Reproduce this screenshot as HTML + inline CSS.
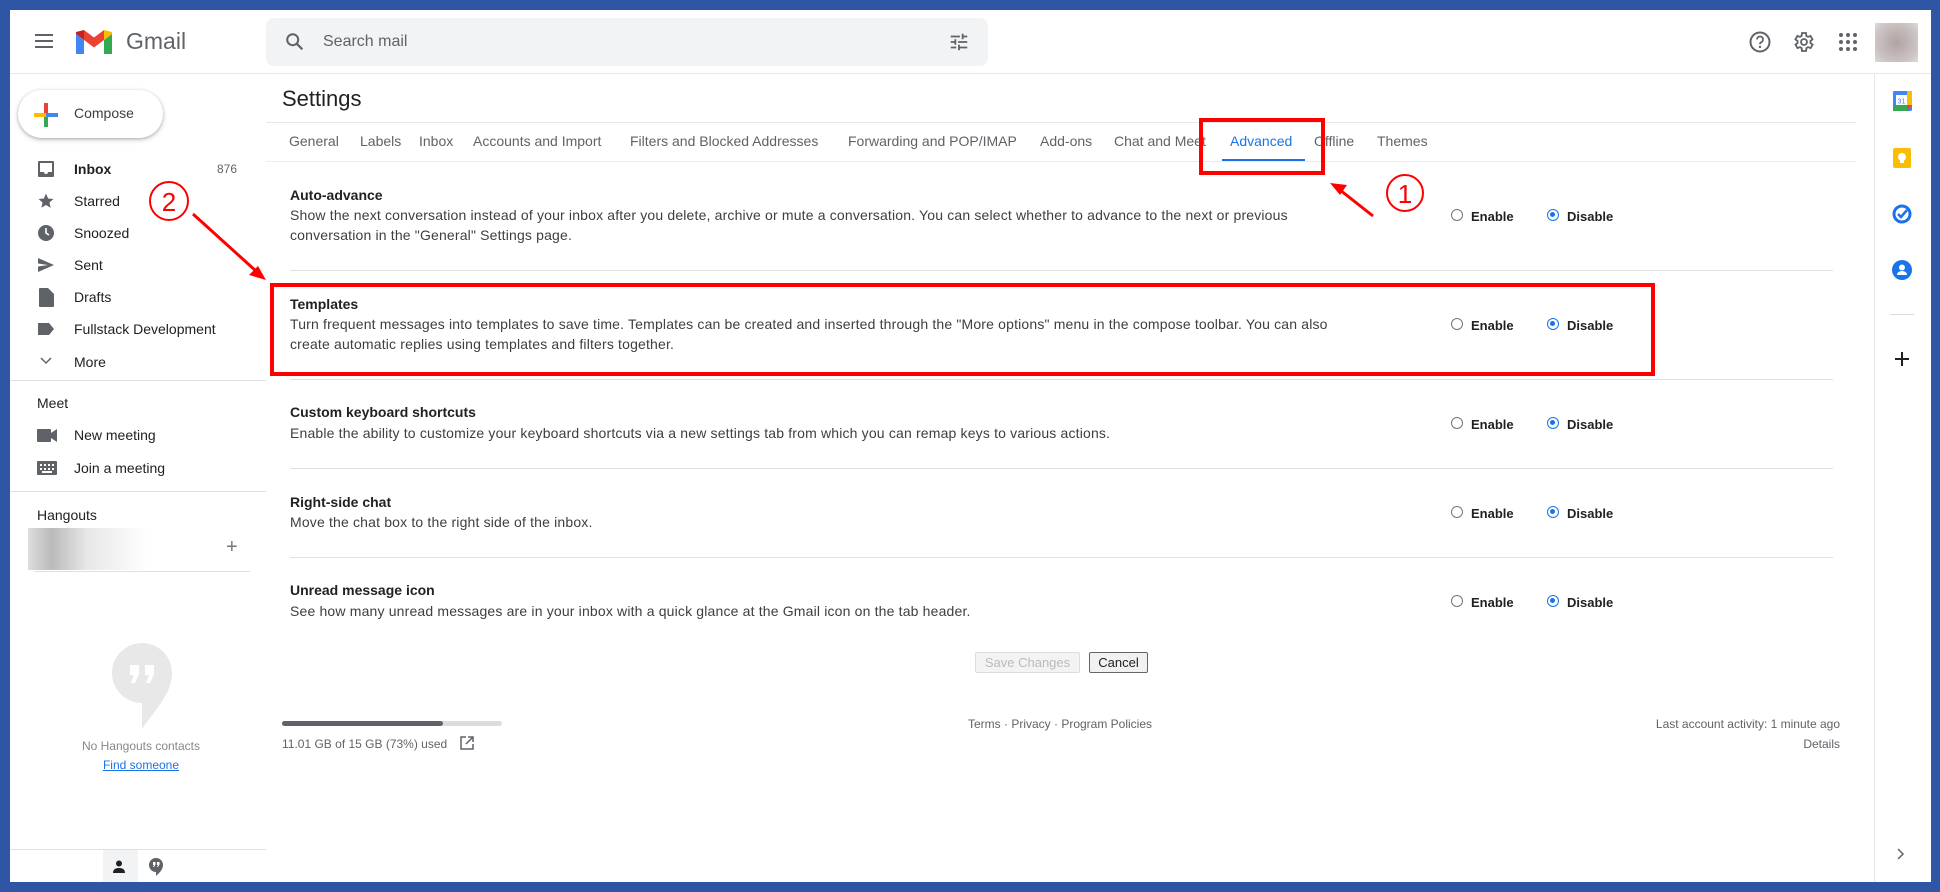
<!DOCTYPE html>
<html><head><meta charset="utf-8"><style>
*{margin:0;padding:0;box-sizing:border-box}
body{width:1940px;height:892px;background:#2f56a5;font-family:"Liberation Sans",Arial,sans-serif;color:#202124;position:relative;overflow:hidden}
#app{position:absolute;left:10px;top:10px;width:1921px;height:872px;background:#fff}
.a{position:absolute;white-space:nowrap}
.hl{position:absolute;height:1px;background:#e0e0e0}
.nav{font-size:14px;color:#202124}
.ico{position:absolute}
.tab{position:absolute;top:133px;font-size:14px;color:#5f6368}
.t{position:absolute;left:290px;font-size:14px;font-weight:bold;color:#202124}
.d{position:absolute;left:290px;font-size:14px;color:#3c4043;line-height:20px;letter-spacing:0.17px}
.r{position:absolute;width:12px;height:12px;border:1px solid #757575;border-radius:50%;background:#fff}
.r.on{border:1.5px solid #1a73e8}
.r.on:after{content:"";position:absolute;left:2px;top:2px;width:5px;height:5px;border-radius:50%;background:#1a73e8}
.rl{position:absolute;font-size:13px;font-weight:bold;color:#202124}
</style></head><body>
<div id="app"></div>
<!-- header -->
<svg class="ico" style="left:35px;top:33px" width="20" height="16"><rect y="1" width="18" height="2" fill="#5f6368"/><rect y="7" width="18" height="2" fill="#5f6368"/><rect y="13" width="18" height="2" fill="#5f6368"/></svg>
<svg class="ico" style="left:76px;top:29px" width="36" height="27" viewBox="0 0 36 27"><path d="M0 5v20h8V11z" fill="#4285f4"/><path d="M28 11v14h8V5z" fill="#34a853"/><path d="M28 1v10l8-6V3z" fill="#fbbc04"/><path d="M8 11V1l10 7.5L28 1v10l-10 7.5z" fill="#ea4335"/><path d="M0 3v2l8 6V1z" fill="#c5221f"/></svg>
<div class="a" style="left:126px;top:28px;font-size:23px;color:#5f6368">Gmail</div>
<div class="a" style="left:266px;top:18px;width:722px;height:48px;background:#f1f3f4;border-radius:8px"></div>
<svg class="ico" style="left:284px;top:31px" width="22" height="22" viewBox="0 0 24 24"><circle cx="9.5" cy="9.5" r="6" stroke="#5f6368" stroke-width="2.2" fill="none"/><path d="M14 14l6 6" stroke="#5f6368" stroke-width="2.4"/></svg>
<div class="a" style="left:323px;top:33px;font-size:16px;color:#5f6368">Search mail</div>
<svg class="ico" style="left:948px;top:31px" width="22" height="22" viewBox="0 0 24 24"><path d="M3 17v2h6v-2zM3 5v2h10V5zm10 16v-2h8v-2h-8v-2h-2v6zM7 9v2H3v2h4v2h2V9zm14 4v-2H11v2zm-6-4h2V7h4V5h-4V3h-2z" fill="#5f6368"/></svg>
<svg class="ico" style="left:1748px;top:30px" width="24" height="24" viewBox="0 0 24 24"><circle cx="12" cy="12" r="9.5" stroke="#5f6368" stroke-width="2" fill="none"/><path d="M9 9.5a3 3 0 1 1 4 2.8c-.8.4-1 1-1 2" stroke="#5f6368" stroke-width="1.8" fill="none"/><circle cx="12" cy="17" r="1.2" fill="#5f6368"/></svg>
<svg class="ico" style="left:1791px;top:30px" width="24" height="24" viewBox="0 0 24 24"><path d="M19.4 13a7.5 7.5 0 0 0 0-2l2.1-1.6-2-3.5-2.5 1a7 7 0 0 0-1.7-1L15 3h-4l-.4 2.9a7 7 0 0 0-1.7 1l-2.5-1-2 3.5L6.6 11a7.5 7.5 0 0 0 0 2l-2.1 1.6 2 3.5 2.5-1a7 7 0 0 0 1.7 1L11 21h4l.4-2.9a7 7 0 0 0 1.7-1l2.5 1 2-3.5z" stroke="#5f6368" stroke-width="1.8" fill="none"/><circle cx="13" cy="12" r="3" stroke="#5f6368" stroke-width="1.8" fill="none"/></svg>
<svg class="ico" style="left:1838px;top:32px" width="20" height="20" viewBox="0 0 20 20" fill="#5f6368"><circle cx="3" cy="3" r="2"/><circle cx="10" cy="3" r="2"/><circle cx="17" cy="3" r="2"/><circle cx="3" cy="10" r="2"/><circle cx="10" cy="10" r="2"/><circle cx="17" cy="10" r="2"/><circle cx="3" cy="17" r="2"/><circle cx="10" cy="17" r="2"/><circle cx="17" cy="17" r="2"/></svg>
<div class="a" style="left:1875px;top:23px;width:43px;height:39px;background:radial-gradient(circle at 50% 50%,#b0a3a3,#ccc3c3 70%,#e0dada)"></div>
<div class="hl" style="left:10px;top:73px;width:1921px;background:#e8e8e8"></div>
<!-- sidebar -->
<div class="a" style="left:18px;top:90px;width:145px;height:48px;border-radius:24px;background:#fff;box-shadow:0 1px 3px rgba(60,64,67,.35),0 2px 6px rgba(60,64,67,.15)"></div>
<svg class="ico" style="left:33px;top:102px" width="26" height="26" viewBox="0 0 26 26"><rect x="11" y="1" width="4" height="12" fill="#ea4335"/><rect x="11" y="13" width="4" height="12" fill="#34a853"/><rect x="1" y="11" width="12" height="4" fill="#fbbc04"/><rect x="13" y="11" width="12" height="4" fill="#4285f4"/></svg>
<div class="a" style="left:74px;top:105px;font-size:14px;color:#3c4043">Compose</div>
<svg class="ico" style="left:37px;top:160px" width="18" height="18" viewBox="0 0 18 18"><path d="M2 1h14a1 1 0 0 1 1 1v14a1 1 0 0 1-1 1H2a1 1 0 0 1-1-1V2a1 1 0 0 1 1-1zm1 2v9h4a2 2 0 0 0 4 0h4V3z" fill="#5f6368"/></svg>
<div class="a nav" style="left:74px;top:161px;font-weight:bold">Inbox</div>
<div class="a" style="left:217px;top:162px;font-size:12px;color:#5f6368">876</div>
<svg class="ico" style="left:37px;top:192px" width="18" height="18" viewBox="0 0 24 24"><path d="M12 17.3l6.2 3.7-1.6-7 5.4-4.7-7.2-.6L12 2 9.2 8.7 2 9.3l5.4 4.7-1.6 7z" fill="#5f6368"/></svg>
<div class="a nav" style="left:74px;top:193px">Starred</div>
<svg class="ico" style="left:37px;top:224px" width="18" height="18" viewBox="0 0 18 18"><circle cx="9" cy="9" r="8" fill="#5f6368"/><path d="M9 4v5l3 2" stroke="#fff" stroke-width="1.6" fill="none"/></svg>
<div class="a nav" style="left:74px;top:225px">Snoozed</div>
<svg class="ico" style="left:37px;top:256px" width="18" height="18" viewBox="0 0 18 18"><path d="M1 2l16 7-16 7v-5.5l10-1.5-10-1.5z" fill="#5f6368"/></svg>
<div class="a nav" style="left:74px;top:257px">Sent</div>
<svg class="ico" style="left:38px;top:288px" width="16" height="19" viewBox="0 0 16 19"><path d="M2 0h8l6 6v12a1 1 0 0 1-1 1H2a1 1 0 0 1-1-1V1a1 1 0 0 1 1-1z" fill="#5f6368"/></svg>
<div class="a nav" style="left:74px;top:289px">Drafts</div>
<svg class="ico" style="left:37px;top:322px" width="18" height="14" viewBox="0 0 18 14"><path d="M1 1h11l5 6-5 6H1z" fill="#5f6368"/></svg>
<div class="a nav" style="left:74px;top:321px">Fullstack Development</div>
<svg class="ico" style="left:40px;top:357px" width="12" height="8"><path d="M1 1l5 5 5-5" stroke="#5f6368" stroke-width="1.5" fill="none"/></svg>
<div class="a nav" style="left:74px;top:354px">More</div>
<div class="hl" style="left:10px;top:380px;width:256px"></div>
<div class="a nav" style="left:37px;top:395px;font-size:14px">Meet</div>
<svg class="ico" style="left:37px;top:429px" width="20" height="13" viewBox="0 0 20 13"><rect x="0" y="0" width="14" height="13" rx="1" fill="#5f6368"/><path d="M14 4l6-4v13l-6-4z" fill="#5f6368"/></svg>
<div class="a nav" style="left:74px;top:427px">New meeting</div>
<svg class="ico" style="left:37px;top:461px" width="20" height="14" viewBox="0 0 20 14"><rect width="20" height="14" rx="1" fill="#5f6368"/><g fill="#fff"><rect x="3" y="3" width="2" height="2"/><rect x="7" y="3" width="2" height="2"/><rect x="11" y="3" width="2" height="2"/><rect x="15" y="3" width="2" height="2"/><rect x="3" y="7" width="2" height="2"/><rect x="7" y="7" width="2" height="2"/><rect x="11" y="7" width="2" height="2"/><rect x="15" y="7" width="2" height="2"/><rect x="5" y="10" width="10" height="2"/></g></svg>
<div class="a nav" style="left:74px;top:460px">Join a meeting</div>
<div class="hl" style="left:10px;top:491px;width:256px"></div>
<div class="a nav" style="left:37px;top:507px">Hangouts</div>
<div class="a" style="left:28px;top:528px;width:120px;height:42px;background:linear-gradient(90deg,#ddd,#bbb 20%,#e8e8e8 50%,#fff)"></div>
<div class="a" style="left:226px;top:536px;font-size:20px;color:#777">+</div>
<div class="hl" style="left:34px;top:571px;width:216px"></div>
<svg class="ico" style="left:111px;top:643px" width="62" height="86" viewBox="0 0 62 86"><path d="M31 0a30 30 0 0 1 30 30c0 20-16 36-30 56V60A30 30 0 0 1 31 0z" fill="#e8e8e8"/><path d="M19 22h9v9l-4 9h-4l3-8h-4zM34 22h9v9l-4 9h-4l3-8h-4z" fill="#fff"/></svg>
<div class="a" style="left:0;width:282px;text-align:center;top:739px;font-size:12px;color:#888">No Hangouts contacts</div>
<div class="a" style="left:0;width:282px;text-align:center;top:758px;font-size:12px;color:#1a73e8;text-decoration:underline">Find someone</div>
<div class="hl" style="left:10px;top:849px;width:256px"></div>
<div class="a" style="left:103px;top:850px;width:35px;height:32px;background:#f1f3f4"></div>
<svg class="ico" style="left:113px;top:860px" width="12" height="13"><circle cx="6" cy="3.5" r="3" fill="#202124"/><path d="M0 13c0-4 3-5 6-5s6 1 6 5z" fill="#202124"/></svg>
<svg class="ico" style="left:149px;top:858px" width="14" height="18"><path d="M7 0a7 7 0 0 1 7 7c0 5-4 8-7 11v-4A7 7 0 0 1 7 0z" fill="#5f6368"/><path d="M4 4h2.5v2.5L5 9H4l1-2H4zM8 4h2.5v2.5L9 9H8l1-2H8z" fill="#fff"/></svg>
<!-- settings -->
<div class="a" style="left:282px;top:86px;font-size:22px;color:#202124">Settings</div>
<div class="hl" style="left:266px;top:122px;width:1590px;background:#e8e8e8"></div>
<div class="tab" style="left:289px">General</div>
<div class="tab" style="left:360px">Labels</div>
<div class="tab" style="left:419px">Inbox</div>
<div class="tab" style="left:473px">Accounts and Import</div>
<div class="tab" style="left:630px">Filters and Blocked Addresses</div>
<div class="tab" style="left:848px">Forwarding and POP/IMAP</div>
<div class="tab" style="left:1040px">Add-ons</div>
<div class="tab" style="left:1114px">Chat and Meet</div>
<div class="tab" style="left:1230px;color:#1a73e8">Advanced</div>
<div class="tab" style="left:1314px">Offline</div>
<div class="tab" style="left:1377px">Themes</div>
<div class="a" style="left:1222px;top:159px;width:83px;height:3px;background:#1a73e8"></div>
<div class="hl" style="left:266px;top:161px;width:1590px;background:#ececec"></div>

<div class="t" style="top:187px">Auto-advance</div>
<div class="d" style="top:205px">Show the next conversation instead of your inbox after you delete, archive or mute a conversation. You can select whether to advance to the next or previous<br>conversation in the "General" Settings page.</div>
<div class="hl" style="left:290px;top:270px;width:1543px"></div>
<div class="t" style="top:296px">Templates</div>
<div class="d" style="top:314px">Turn frequent messages into templates to save time. Templates can be created and inserted through the "More options" menu in the compose toolbar. You can also<br>create automatic replies using templates and filters together.</div>
<div class="hl" style="left:290px;top:379px;width:1543px"></div>
<div class="t" style="top:404px">Custom keyboard shortcuts</div>
<div class="d" style="top:423px">Enable the ability to customize your keyboard shortcuts via a new settings tab from which you can remap keys to various actions.</div>
<div class="hl" style="left:290px;top:468px;width:1543px"></div>
<div class="t" style="top:494px">Right-side chat</div>
<div class="d" style="top:512px">Move the chat box to the right side of the inbox.</div>
<div class="hl" style="left:290px;top:557px;width:1543px"></div>
<div class="t" style="top:582px">Unread message icon</div>
<div class="d" style="top:601px">See how many unread messages are in your inbox with a quick glance at the Gmail icon on the tab header.</div>

<!-- radios -->
<div class="r" style="left:1451px;top:209px"></div><div class="rl" style="left:1471px;top:209px">Enable</div><div class="r on" style="left:1547px;top:209px"></div><div class="rl" style="left:1567px;top:209px">Disable</div>
<div class="r" style="left:1451px;top:318px"></div><div class="rl" style="left:1471px;top:318px">Enable</div><div class="r on" style="left:1547px;top:318px"></div><div class="rl" style="left:1567px;top:318px">Disable</div>
<div class="r" style="left:1451px;top:417px"></div><div class="rl" style="left:1471px;top:417px">Enable</div><div class="r on" style="left:1547px;top:417px"></div><div class="rl" style="left:1567px;top:417px">Disable</div>
<div class="r" style="left:1451px;top:506px"></div><div class="rl" style="left:1471px;top:506px">Enable</div><div class="r on" style="left:1547px;top:506px"></div><div class="rl" style="left:1567px;top:506px">Disable</div>
<div class="r" style="left:1451px;top:595px"></div><div class="rl" style="left:1471px;top:595px">Enable</div><div class="r on" style="left:1547px;top:595px"></div><div class="rl" style="left:1567px;top:595px">Disable</div>

<div class="a" style="left:975px;top:652px;width:105px;height:21px;border:1px solid #ddd;background:#f3f3f3;font-size:13px;color:#bbb;text-align:center;line-height:19px;border-radius:2px">Save Changes</div>
<div class="a" style="left:1089px;top:652px;width:59px;height:21px;border:1px solid #666;background:#f1f1f1;font-size:13px;color:#202124;text-align:center;line-height:19px;border-radius:2px">Cancel</div>

<div class="a" style="left:282px;top:721px;width:220px;height:5px;background:#dadce0;border-radius:3px"></div>
<div class="a" style="left:282px;top:721px;width:161px;height:5px;background:#5f6368;border-radius:3px"></div>
<div class="a" style="left:282px;top:737px;font-size:12px;color:#5f6368">11.01 GB of 15 GB (73%) used</div>
<svg class="ico" style="left:460px;top:736px" width="14" height="14" viewBox="0 0 14 14"><path d="M6 1H1v12h12V8M8 1h5v5M13 1L6 8" stroke="#5f6368" stroke-width="1.5" fill="none"/></svg>
<div class="a" style="left:960px;width:200px;text-align:center;top:717px;font-size:12px;color:#5f6368">Terms · Privacy · Program Policies</div>
<div class="a" style="right:100px;top:717px;font-size:12px;color:#5f6368">Last account activity: 1 minute ago</div>
<div class="a" style="right:100px;top:737px;font-size:12px;color:#5f6368">Details</div>

<!-- right panel -->
<div class="a" style="left:1874px;top:74px;width:1px;height:808px;background:#e8e8e8"></div>
<svg class="ico" style="left:1893px;top:91px" width="19" height="20" viewBox="0 0 19 20"><rect x="0" y="0" width="19" height="20" rx="1.5" fill="#4285f4"/><rect x="0" y="14" width="14" height="6" fill="#34a853"/><rect x="14" y="0" width="5" height="14" fill="#fbbc04"/><path d="M14 14h5l-5 6z" fill="#ea4335"/><rect x="3" y="4" width="11" height="10" fill="#fff"/><text x="8.5" y="12.5" font-size="7" fill="#4285f4" text-anchor="middle" font-family="Liberation Sans">31</text></svg>
<svg class="ico" style="left:1893px;top:148px" width="18" height="20"><rect width="18" height="20" rx="2" fill="#fbbc04"/><circle cx="9" cy="9" r="4" fill="#fff"/><rect x="7" y="12" width="4" height="3" fill="#fff"/></svg>
<svg class="ico" style="left:1892px;top:204px" width="20" height="20" viewBox="0 0 20 20"><circle cx="10" cy="10" r="8" stroke="#1a73e8" stroke-width="3" fill="none"/><path d="M6 10l3 3 6-7" stroke="#1a73e8" stroke-width="2.5" fill="none"/></svg>
<svg class="ico" style="left:1892px;top:260px" width="20" height="20"><circle cx="10" cy="10" r="10" fill="#1a73e8"/><circle cx="10" cy="7.5" r="3" fill="#fff"/><path d="M5 15c0-3 3-4 5-4s5 1 5 4z" fill="#fff"/></svg>
<div class="a" style="left:1890px;top:314px;width:24px;height:1px;background:#dadce0"></div>
<svg class="ico" style="left:1894px;top:351px" width="16" height="16"><path d="M8 1v14M1 8h14" stroke="#202124" stroke-width="2"/></svg>
<svg class="ico" style="left:1896px;top:848px" width="10" height="12"><path d="M2 1l5 5-5 5" stroke="#5f6368" stroke-width="1.5" fill="none"/></svg>

<!-- annotations -->
<div class="a" style="left:1199px;top:118px;width:126px;height:57px;border:4px solid #ff0000"></div>
<div class="a" style="left:270px;top:283px;width:1385px;height:93px;border:4px solid #ff0000"></div>
<svg class="ico" style="left:0;top:0" width="1940" height="892">
<circle cx="1405" cy="193" r="18" stroke="#ff0000" stroke-width="2" fill="none"/>
<text x="1405" y="203" font-size="26" fill="#ff0000" text-anchor="middle" font-family="Liberation Sans">1</text>
<line x1="1373" y1="216" x2="1340" y2="190" stroke="#ff0000" stroke-width="3"/>
<path d="M1330 183l17 2-7 10z" fill="#ff0000"/>
<circle cx="169" cy="201" r="19" stroke="#ff0000" stroke-width="2" fill="none"/>
<text x="169" y="211" font-size="26" fill="#ff0000" text-anchor="middle" font-family="Liberation Sans">2</text>
<line x1="193" y1="214" x2="256" y2="271" stroke="#ff0000" stroke-width="3"/>
<path d="M266 280l-17-5 9-9z" fill="#ff0000"/>
</svg>
</body></html>
